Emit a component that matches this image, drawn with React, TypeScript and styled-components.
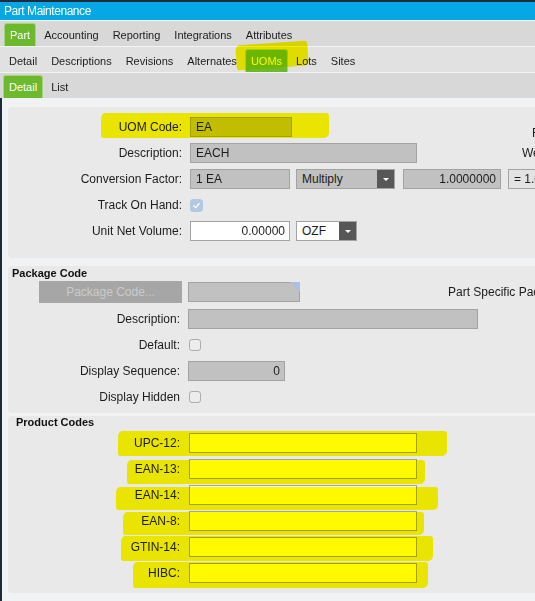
import React from "react";
import styled, { createGlobalStyle, css } from "styled-components";

const GlobalStyle = createGlobalStyle`
  html, body { margin: 0; padding: 0; background: #f1f2f4; }
  body { font-family: "Liberation Sans", Arial, sans-serif; font-size: 12px; color: #1c1c1c; }
  * { box-sizing: border-box; }
`;

const FONT = `"Liberation Sans", Arial, sans-serif`;

const Window = styled.div`
  width: 535px;
  height: 601px;
  overflow: hidden;
  display: flex;
  flex-direction: column;
  background: #f1f2f4;
`;

const TitleBar = styled.div`
  flex: none;
  height: 20px;
  border-top: 2px solid #1f2c3b;
  background: #05a7e5;
  color: #ffffff;
  font-size: 12px;
  letter-spacing: -0.45px;
  padding-left: 4px;
  display: flex;
  align-items: center;
`;

const TabRow = styled.div<{ $bg: string; $pad: number }>`
  flex: none;
  height: 26px;
  border-top: 1px solid #f3f3f3;
  background: ${(p) => p.$bg};
  display: flex;
  align-items: flex-end;
  gap: 2px;
  padding-left: ${(p) => p.$pad}px;
`;

const Tab = styled.div<{ $active?: boolean }>`
  position: relative;
  height: 23px;
  display: flex;
  align-items: center;
  font-size: 11px;
  white-space: nowrap;
  padding: 0 6px;
  color: #1c1c1c;
  ${(p) =>
    p.$active &&
    css`
      padding: 0 5px;
      background: #6cb92d;
      color: #ffffff;
      border: 1px solid #a4d57a;
      border-bottom: none;
      border-radius: 3px 3px 0 0;
    `}
`;

const Marker = styled.span<{ $l: number; $t: number; $w: number; $h: number; $rot?: number }>`
  position: absolute;
  left: ${(p) => p.$l}px;
  top: ${(p) => p.$t}px;
  width: ${(p) => p.$w}px;
  height: ${(p) => p.$h}px;
  background: #fffa00;
  mix-blend-mode: multiply;
  pointer-events: none;
  border-radius: 4px 3px 5px 2px / 6px 3px 5px 4px;
  transform: rotate(${(p) => p.$rot ?? 0}deg);
`;

const Content = styled.div`
  flex: 1;
  border-left: 2px solid #1d2a3a;
  padding: 9px 0 0 6px;
  display: flex;
  flex-direction: column;
  overflow: hidden;
`;

const Panel = styled.section<{ $top?: number; $pt: number; $pb: number }>`
  flex: none;
  margin-top: ${(p) => p.$top ?? 0}px;
  margin-right: -40px;
  background: #e9e9e9;
  border-radius: 4px;
  padding: ${(p) => p.$pt}px 0 ${(p) => p.$pb}px 0;
  display: flex;
  flex-direction: column;
`;

const Heading = styled.div<{ $indent: number; $after: number }>`
  font-size: 11px;
  font-weight: bold;
  line-height: 13px;
  color: #111111;
  padding-left: ${(p) => p.$indent}px;
  margin-bottom: ${(p) => p.$after}px;
`;

const Rows = styled.div`
  display: flex;
  flex-direction: column;
  gap: 6px;
`;

const FormRow = styled.div<{ $label: number; $gap: number; $field?: number; $h?: number }>`
  position: relative;
  display: grid;
  grid-template-columns: ${(p) => (p.$field ? `${p.$label}px ${p.$field}px auto` : `${p.$label}px auto`)};
  column-gap: ${(p) => p.$gap}px;
  height: ${(p) => p.$h ?? 20}px;
  align-items: center;
`;

const Label = styled.label`
  text-align: right;
  white-space: nowrap;
  font-size: 12px;
  color: #1c1c1c;
`;

const Fields = styled.div<{ $span?: boolean }>`
  display: flex;
  align-items: center;
  grid-column: ${(p) => (p.$span ? "2 / -1" : "auto")};
  height: 100%;
`;

const Aside = styled.span<{ $dx?: number; $dy?: number }>`
  white-space: nowrap;
  font-size: 12px;
  padding-left: ${(p) => p.$dx ?? 0}px;
  transform: translateY(${(p) => p.$dy ?? 0}px);
`;

const TONES = { grey: "#c1c1c1", white: "#ffffff", light: "#e3e3e3" };

const TextBox = styled.input<{ $w: number; $tone?: keyof typeof TONES; $right?: boolean; $ml?: number }>`
  flex: none;
  width: ${(p) => p.$w}px;
  height: 20px;
  margin: 0 0 0 ${(p) => p.$ml ?? 0}px;
  border: 1px solid #a3a3a3;
  background: ${(p) => TONES[p.$tone ?? "grey"]};
  font: 12px ${FONT};
  color: #1c1c1c;
  padding: 0 ${(p) => (p.$right ? 4 : 5)}px 0 5px;
  text-align: ${(p) => (p.$right ? "right" : "left")};
  outline: none;
`;

const Select = styled.div<{ $w: number; $white?: boolean; $ml?: number }>`
  flex: none;
  width: ${(p) => p.$w}px;
  height: 20px;
  margin-left: ${(p) => p.$ml ?? 0}px;
  border: 1px solid #a3a3a3;
  background: ${(p) => (p.$white ? "#ffffff" : "#c1c1c1")};
  display: flex;
`;

const SelectText = styled.span`
  flex: 1;
  padding-left: 5px;
  display: flex;
  align-items: center;
  font-size: 12px;
`;

const SelectButton = styled.span<{ $w: number }>`
  width: ${(p) => p.$w}px;
  background: #575757;
  display: flex;
  align-items: center;
  justify-content: center;
  &::after {
    content: "";
    border-left: 3px solid transparent;
    border-right: 3px solid transparent;
    border-top: 3px solid #ffffff;
  }
`;

const Check = styled.span<{ $checked?: boolean; $size: number; $ml?: number }>`
  flex: none;
  width: ${(p) => p.$size}px;
  height: ${(p) => p.$size}px;
  margin-left: ${(p) => p.$ml ?? 0}px;
  border-radius: 3px;
  display: flex;
  align-items: center;
  justify-content: center;
  background: ${(p) => (p.$checked ? "#b3c9e2" : "#ededed")};
  border: 1px solid ${(p) => (p.$checked ? "#b3c9e2" : "#adadad")};
`;

const GhostButton = styled.button`
  justify-self: end;
  margin-right: -2px;
  width: 143px;
  height: 22px;
  border: none;
  background: #a6a6a6;
  color: #cacaca;
  font: 12px ${FONT};
  padding: 0;
`;

const CornerBox = styled.div`
  position: relative;
  flex: none;
  display: flex;
  &::after {
    content: "";
    position: absolute;
    top: 0;
    right: 0;
    border-top: 10px solid #a9c1e3;
    border-left: 10px solid transparent;
  }
`;

const CheckMark = () => (
  <svg width="9" height="9" viewBox="0 0 9 9">
    <polyline points="1.5,4.5 3.6,6.6 7.5,2.2" fill="none" stroke="#ffffff" strokeWidth="1.3" />
  </svg>
);

const productRows: { label: string; m: [number, number, number, number] }[] = [
  { label: "UPC-12:", m: [110, -2, 329, 25] },
  { label: "EAN-13:", m: [119, 1, 298, 24] },
  { label: "EAN-14:", m: [108, 2, 322, 23] },
  { label: "EAN-8:", m: [115, 1, 301, 23] },
  { label: "GTIN-14:", m: [113, -1, 312, 25] },
  { label: "HIBC:", m: [125, -1, 295, 26] },
];

export default function App() {
  return (
    <>
      <GlobalStyle />
      <Window>
        <TitleBar>Part Maintenance</TitleBar>
        <TabRow $bg="#d8d8d8" $pad={4}>
          <Tab $active>Part</Tab>
          <Tab>Accounting</Tab>
          <Tab>Reporting</Tab>
          <Tab>Integrations</Tab>
          <Tab>Attributes</Tab>
        </TabRow>
        <TabRow $bg="#e1e1e1" $pad={3}>
          <Tab>Detail</Tab>
          <Tab>Descriptions</Tab>
          <Tab>Revisions</Tab>
          <Tab>Alternates</Tab>
          <Tab $active>
            UOMs
            <Marker $l={-10} $t={-7} $w={72} $h={25} $rot={-4} />
          </Tab>
          <Tab>Lots</Tab>
          <Tab>Sites</Tab>
        </TabRow>
        <TabRow $bg="#d8d8d8" $pad={3}>
          <Tab $active>Detail</Tab>
          <Tab>List</Tab>
        </TabRow>

        <Content>
          <Panel $pt={10} $pb={17}>
            <Rows>
              <FormRow $label={174} $gap={8} $field={324}>
                <Label>UOM Code:</Label>
                <Fields>
                  <TextBox $w={102} readOnly value="EA" />
                </Fields>
                <Aside $dx={10} $dy={6}>F</Aside>
                <Marker $l={93} $t={-4} $w={228} $h={25} />
              </FormRow>
              <FormRow $label={174} $gap={8} $field={324}>
                <Label>Description:</Label>
                <Fields>
                  <TextBox $w={227} readOnly value="EACH" />
                </Fields>
                <Aside>Weight:</Aside>
              </FormRow>
              <FormRow $label={174} $gap={8} $field={324}>
                <Label>Conversion Factor:</Label>
                <Fields $span>
                  <TextBox $w={100} readOnly value="1 EA" />
                  <Select $w={99} $ml={6}>
                    <SelectText>Multiply</SelectText>
                    <SelectButton $w={17} />
                  </Select>
                  <TextBox $w={98} $ml={8} $right readOnly value="1.0000000" />
                  <TextBox $w={100} $ml={7} $tone="light" readOnly value="= 1.0000000 EA" />
                </Fields>
              </FormRow>
              <FormRow $label={174} $gap={8} $field={324}>
                <Label>Track On Hand:</Label>
                <Fields>
                  <Check $checked $size={13}>
                    <CheckMark />
                  </Check>
                </Fields>
              </FormRow>
              <FormRow $label={174} $gap={8} $field={324}>
                <Label>Unit Net Volume:</Label>
                <Fields>
                  <TextBox $w={100} $tone="white" $right readOnly value="0.00000" />
                  <Select $w={61} $ml={6} $white>
                    <SelectText>OZF</SelectText>
                    <SelectButton $w={17} />
                  </Select>
                </Fields>
              </FormRow>
            </Rows>
          </Panel>

          <Panel $top={8} $pt={1} $pb={6}>
            <Heading $indent={4} $after={1}>Package Code</Heading>
            <Rows>
              <FormRow $label={172} $gap={8} $field={252} $h={22}>
                <GhostButton>Package Code...</GhostButton>
                <Fields>
                  <CornerBox>
                    <TextBox $w={112} readOnly value="" />
                  </CornerBox>
                </Fields>
                <Aside>Part Specific Package Codes</Aside>
              </FormRow>
              <FormRow $label={172} $gap={8} $field={252}>
                <Label>Description:</Label>
                <Fields $span>
                  <TextBox $w={290} readOnly value="" />
                </Fields>
              </FormRow>
              <FormRow $label={172} $gap={8} $field={252}>
                <Label>Default:</Label>
                <Fields>
                  <Check $size={12} $ml={1} />
                </Fields>
              </FormRow>
              <FormRow $label={172} $gap={8} $field={252}>
                <Label>Display Sequence:</Label>
                <Fields>
                  <TextBox $w={97} $right readOnly value="0" />
                </Fields>
              </FormRow>
              <FormRow $label={172} $gap={8} $field={252}>
                <Label>Display Hidden</Label>
                <Fields>
                  <Check $size={12} $ml={1} />
                </Fields>
              </FormRow>
            </Rows>
          </Panel>

          <Panel $top={3} $pt={0} $pb={10}>
            <Heading $indent={8} $after={4}>Product Codes</Heading>
            <Rows>
              {productRows.map((r) => (
                <FormRow key={r.label} $label={172} $gap={9}>
                  <Label>{r.label}</Label>
                  <Fields>
                    <TextBox $w={228} $tone="white" readOnly value="" />
                  </Fields>
                  <Marker $l={r.m[0]} $t={r.m[1]} $w={r.m[2]} $h={r.m[3]} />
                </FormRow>
              ))}
            </Rows>
          </Panel>
        </Content>
      </Window>
    </>
  );
}
